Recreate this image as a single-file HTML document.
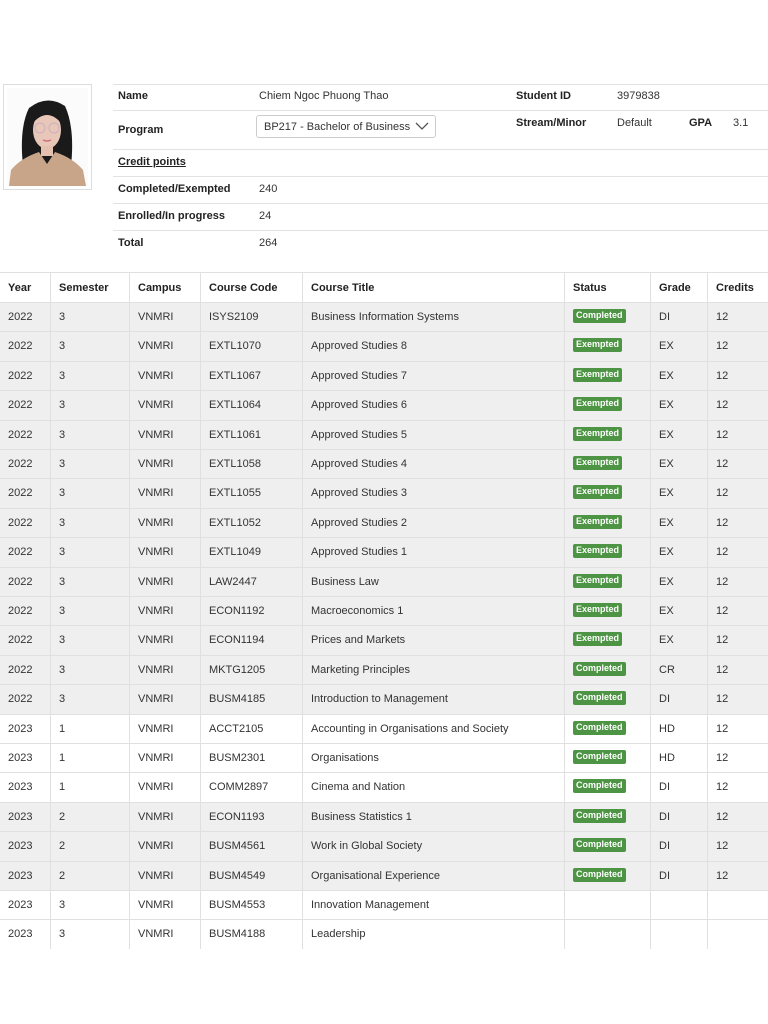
<!DOCTYPE html>
<html><head><meta charset="utf-8"><style>
*{margin:0;padding:0;box-sizing:border-box}
body{width:768px;height:1024px;background:#fff;font-family:"Liberation Sans",Arial,sans-serif;font-size:11px;color:#333;position:relative;overflow:hidden}
.a{position:absolute;white-space:nowrap}
.b{font-weight:bold;color:#222}
.hl{position:absolute;left:113px;right:0;height:1px;background:#e2e2e2}
.row{position:absolute;left:0;width:768px;height:30px;border-top:1px solid #e0e0e0}
.row div{position:absolute;top:0;height:29px;line-height:29px;padding-left:8px;border-left:1px solid #e0e0e0}
.badge{display:inline-block;background:#4d9444;color:#fff;font-weight:bold;font-size:9px;line-height:13px;height:14px;padding:0 3px;border-radius:2px;vertical-align:middle;margin-top:-2px}
</style></head><body>
<div class="a" style="left:3px;top:84px;width:89px;height:106px;border:1px solid #ddd;background:#fff;padding:3px">
<svg width="81" height="98" viewBox="0 0 81 98">
<rect width="81" height="98" fill="#fbfbfb"/>
<path d="M16 78 Q12 40 22 20 Q40 6 58 18 Q68 40 64 78 Z" fill="#1a1a1a"/>
<ellipse cx="40" cy="42" rx="14" ry="19" fill="#e9c7b8"/>
<path d="M25 36 Q40 18 55 36 Q52 20 40 18 Q28 20 25 36Z" fill="#1a1a1a"/>
<path d="M2 98 L4 82 Q14 70 32 64 L40 76 L48 64 Q66 70 76 82 L79 98Z" fill="#c8a488"/>
<rect x="34" y="58" width="12" height="10" fill="#e5c0ae"/>
<circle cx="33" cy="40" r="5" fill="none" stroke="#c9b0c0" stroke-width="1"/>
<circle cx="47" cy="40" r="5" fill="none" stroke="#c9b0c0" stroke-width="1"/>
<path d="M36 52 Q40 54 44 52" stroke="#d07080" stroke-width="1.5" fill="none"/>
</svg></div>
<div class="hl" style="top:84px"></div>
<div class="hl" style="top:110px"></div>
<div class="hl" style="top:149px"></div>
<div class="hl" style="top:176px"></div>
<div class="hl" style="top:203px"></div>
<div class="hl" style="top:230px"></div>
<div class="a b" style="left:118px;top:90px">Name</div>
<div class="a" style="left:259px;top:90px">Chiem Ngoc Phuong Thao</div>
<div class="a b" style="left:516px;top:90px">Student ID</div>
<div class="a" style="left:617px;top:90px">3979838</div>
<div class="a b" style="left:118px;top:124px">Program</div>
<div class="a" style="left:256px;top:115px;width:180px;height:23px;border:1px solid #ccc;border-radius:3px;padding:5px 0 0 7px">BP217 - Bachelor of Business
<svg style="position:absolute;right:6px;top:6px" width="14" height="9" viewBox="0 0 14 9"><path d="M1 1 L7 7 L13 1" stroke="#555" stroke-width="1.3" fill="none"/></svg></div>
<div class="a b" style="left:516px;top:117px">Stream/Minor</div>
<div class="a" style="left:617px;top:117px">Default</div>
<div class="a b" style="left:689px;top:117px">GPA</div>
<div class="a" style="left:733px;top:117px">3.1</div>
<div class="a b" style="left:118px;top:156px;text-decoration:underline">Credit points</div>
<div class="a b" style="left:118px;top:183px">Completed/Exempted</div>
<div class="a" style="left:259px;top:183px">240</div>
<div class="a b" style="left:118px;top:210px">Enrolled/In progress</div>
<div class="a" style="left:259px;top:210px">24</div>
<div class="a b" style="left:118px;top:237px">Total</div>
<div class="a" style="left:259px;top:237px">264</div>
<div id="t"></div>
<script>
var cols=[0,50,129,200,302,564,650,707];
var H=['Year','Semester','Campus','Course Code','Course Title','Status','Grade','Credits'];
var R=[
['2022','3','VNMRI','ISYS2109','Business Information Systems','C','DI','12',1],
['2022','3','VNMRI','EXTL1070','Approved Studies 8','E','EX','12',1],
['2022','3','VNMRI','EXTL1067','Approved Studies 7','E','EX','12',1],
['2022','3','VNMRI','EXTL1064','Approved Studies 6','E','EX','12',1],
['2022','3','VNMRI','EXTL1061','Approved Studies 5','E','EX','12',1],
['2022','3','VNMRI','EXTL1058','Approved Studies 4','E','EX','12',1],
['2022','3','VNMRI','EXTL1055','Approved Studies 3','E','EX','12',1],
['2022','3','VNMRI','EXTL1052','Approved Studies 2','E','EX','12',1],
['2022','3','VNMRI','EXTL1049','Approved Studies 1','E','EX','12',1],
['2022','3','VNMRI','LAW2447','Business Law','E','EX','12',1],
['2022','3','VNMRI','ECON1192','Macroeconomics 1','E','EX','12',1],
['2022','3','VNMRI','ECON1194','Prices and Markets','E','EX','12',1],
['2022','3','VNMRI','MKTG1205','Marketing Principles','C','CR','12',1],
['2022','3','VNMRI','BUSM4185','Introduction to Management','C','DI','12',1],
['2023','1','VNMRI','ACCT2105','Accounting in Organisations and Society','C','HD','12',0],
['2023','1','VNMRI','BUSM2301','Organisations','C','HD','12',0],
['2023','1','VNMRI','COMM2897','Cinema and Nation','C','DI','12',0],
['2023','2','VNMRI','ECON1193','Business Statistics 1','C','DI','12',1],
['2023','2','VNMRI','BUSM4561','Work in Global Society','C','DI','12',1],
['2023','2','VNMRI','BUSM4549','Organisational Experience','C','DI','12',1],
['2023','3','VNMRI','BUSM4553','Innovation Management','','','',0],
['2023','3','VNMRI','BUSM4188','Leadership','','','',0]];
function row(vals,top,bg,head){
 var h='<div class="row" style="top:'+top+'px;background:'+bg+';'+(head?'height:31px;':'')+'">';
 for(var i=0;i<8;i++){var w=(i<7?cols[i+1]:768)-cols[i];var v=vals[i];
  if(i==5&&!head&&v)v='<span class="badge">'+(v=='C'?'Completed':'Exempted')+'</span>';
  h+='<div style="left:'+cols[i]+'px;width:'+w+'px;'+(i==0?'border-left:none;':'')+(head?'font-weight:bold;color:#222;height:30px;line-height:30px;':'')+'">'+v+'</div>';}
 return h+'</div>';}
var s=row(H,272,'#fff',1);
for(var j=0;j<R.length;j++){s+=row(R[j],302+j*29.4,R[j][8]?'#efefef':'#fff',0);}
document.getElementById('t').innerHTML=s;
</script>
</body></html>
